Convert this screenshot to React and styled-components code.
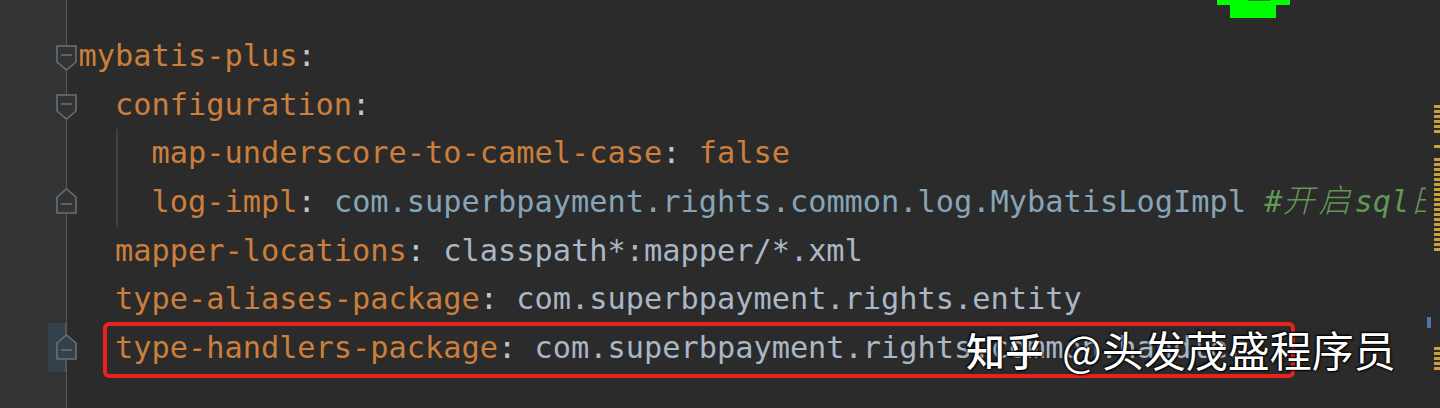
import React from "react";
import styled, { createGlobalStyle } from "styled-components";

const Global = createGlobalStyle`
  html, body { margin: 0; padding: 0; background: #2b2b2b; }
  #root { width: 1440px; height: 408px; overflow: hidden; }
`;

const LINE_H = 48.7;

const Editor = styled.div`
  position: relative;
  display: flex;
  width: 1440px;
  height: 408px;
  overflow: hidden;
  background: #2b2b2b;
  font-family: "DejaVu Sans Mono", "Liberation Mono", "Noto Sans CJK SC", monospace;
  font-size: 30.3px;
`;

const Gutter = styled.div`
  flex: 0 0 76px;
  display: flex;
  flex-direction: column;
  padding-top: 31px;
  background:
    linear-gradient(to right, #313335 0, #313335 66px, transparent 66px),
    linear-gradient(to right, transparent 65px, #55585a 65px, #55585a 67px, transparent 67px);
`;

const GutterRow = styled.div`
  height: ${LINE_H}px;
  display: flex;
  align-items: center;
  padding-left: 48px;
  box-sizing: border-box;
  background: ${(p) =>
    p.$active
      ? "linear-gradient(to right, transparent 48px, #33414d 48px, #33414d 65px, #55585a 65px, #55585a 67px, transparent 67px)"
      : "none"};
`;

const FoldMark = styled.svg`
  display: block;
  margin-left: 7.5px;
  margin-top: ${(p) => p.$dy}px;
  flex: none;
`;

const FoldStart = () => (
  <FoldMark width="21" height="26" viewBox="0 0 21 26" $dy={5}>
    <path d="M1 1 H20 V17 L10.5 25 L1 17 Z" fill="#313335" stroke="#6c6f72" strokeWidth="1.6" />
    <path d="M5 10 H16" stroke="#6c6f72" strokeWidth="1.6" />
  </FoldMark>
);

const FoldEnd = ({ bg = "#313335" }) => (
  <FoldMark width="21" height="26" viewBox="0 0 21 26" $dy={0}>
    <path d="M1 9 L10.5 1 L20 9 V25 H1 Z" fill={bg} stroke="#6c6f72" strokeWidth="1.6" />
    <path d="M5 16 H16" stroke="#6c6f72" strokeWidth="1.6" />
  </FoldMark>
);

const Code = styled.div`
  flex: 1;
  min-width: 0;
  display: flex;
  flex-direction: column;
  padding-top: 32px;
  padding-left: 2px;
  overflow: hidden;
`;

const Line = styled.div`
  height: ${LINE_H}px;
  line-height: ${LINE_H}px;
  white-space: pre;
  padding-left: ${(p) => p.$indent * 2}ch;
  background: ${(p) =>
    p.$guide
      ? "linear-gradient(to right, transparent calc(2ch + 1px), #3f4143 calc(2ch + 1px), #3f4143 calc(2ch + 3px), transparent calc(2ch + 3px))"
      : "none"};
`;

const Key = styled.span`
  color: #cc7f3c;
`;
const Colon = styled.span`
  color: #bfc6cc;
`;
const Value = styled.span`
  color: ${(p) =>
    p.$kind === "kw" ? "#cc7f3c" : p.$kind === "class" ? "#86a5b8" : "#a9b7c6"};
`;
const Comment = styled.span`
  color: #629755;
  font-style: italic;
`;
const Cjk = styled.span`
  font-family: "Noto Sans CJK SC", sans-serif;
  font-size: 32px;
  line-height: 1;
  letter-spacing: 4px;
  font-weight: 300;
`;

const MarkerStrip = styled.div`
  position: relative;
  flex: 0 0 14px;
`;

const Mark = styled.div`
  position: absolute;
  right: ${(p) => (p.$blue ? 9 : 0)}px;
  width: ${(p) => (p.$blue ? 4 : 6)}px;
  background: ${(p) =>
    p.$blue
      ? "#4a78a8"
      : "repeating-linear-gradient(to bottom, #c9a23c 0, #c9a23c 3px, #2b2b2b 3px, #2b2b2b 5px)"};
`;

const GreenBlob = styled.div`
  position: absolute;
  left: 1217px;
  top: 0;
  width: 73px;
  height: 5px;
  background: #00ff00;
  &::after {
    content: "";
    position: absolute;
    left: 13px;
    top: 5px;
    width: 46px;
    height: 13px;
    background: #00ff00;
  }
  &::before {
    content: "";
    position: absolute;
    left: 31px;
    top: 0;
    width: 22px;
    height: 1px;
    background: #1a7a1a;
  }
`;

const RedBox = styled.div`
  position: absolute;
  left: 103px;
  top: 322px;
  width: 1192px;
  height: 56px;
  box-sizing: border-box;
  border: 4px solid #e8231d;
  border-radius: 6px;
  pointer-events: none;
`;

const Watermark = styled.div`
  position: absolute;
  left: 966px;
  top: 323px;
  display: flex;
  align-items: center;
  gap: 18px;
  font-family: "Noto Sans CJK SC", sans-serif;
  color: #ffffff;
  line-height: 52px;
  white-space: nowrap;
  text-shadow: 0 0 2px #000, 1px 1px 2px #000, -1px -1px 2px #000;
`;

const Brand = styled.span`
  font-size: 39px;
  font-weight: 500;
`;
const Handle = styled.span`
  font-size: 42px;
  font-weight: 400;
`;

const rows = [
  { indent: 0, key: "mybatis-plus", fold: "start" },
  { indent: 1, key: "configuration", fold: "start" },
  { indent: 2, guide: true, key: "map-underscore-to-camel-case", value: "false", kind: "kw" },
  {
    indent: 2,
    guide: true,
    key: "log-impl",
    value: "com.superbpayment.rights.common.log.MybatisLogImpl",
    kind: "class",
    comment: true,
    fold: "end",
  },
  { indent: 1, key: "mapper-locations", value: "classpath*:mapper/*.xml" },
  { indent: 1, key: "type-aliases-package", value: "com.superbpayment.rights.entity" },
  {
    indent: 1,
    key: "type-handlers-package",
    value: "com.superbpayment.rights.common.handler",
    fold: "end",
    active: true,
  },
];

export default function App() {
  return (
    <>
      <Global />
      <Editor>
        <Gutter>
          {rows.map((r, i) => (
            <GutterRow key={i} $active={r.active}>
              {r.fold === "start" && <FoldStart />}
              {r.fold === "end" && <FoldEnd bg={r.active ? "#33414d" : "#313335"} />}
            </GutterRow>
          ))}
        </Gutter>
        <Code>
          {rows.map((r, i) => (
            <Line key={i} $indent={r.indent} $guide={r.guide}>
              <Key>{r.key}</Key>
              <Colon>:</Colon>
              {r.value && (
                <>
                  {" "}
                  <Value $kind={r.kind}>{r.value}</Value>
                </>
              )}
              {r.comment && (
                <>
                  {" "}
                  <Comment>
                    #<Cjk>开启</Cjk>sql<Cjk>日志</Cjk>
                  </Comment>
                </>
              )}
            </Line>
          ))}
        </Code>
        <MarkerStrip>
          <Mark style={{ top: 105, height: 30 }} />
          <Mark style={{ top: 145, height: 5 }} />
          <Mark style={{ top: 158, height: 95 }} />
          <Mark $blue style={{ top: 317, height: 11 }} />
          <Mark style={{ top: 347, height: 24 }} />
        </MarkerStrip>
        <GreenBlob />
        <RedBox />
        <Watermark>
          <Brand>知乎</Brand>
          <Handle>@头发茂盛程序员</Handle>
        </Watermark>
      </Editor>
    </>
  );
}
